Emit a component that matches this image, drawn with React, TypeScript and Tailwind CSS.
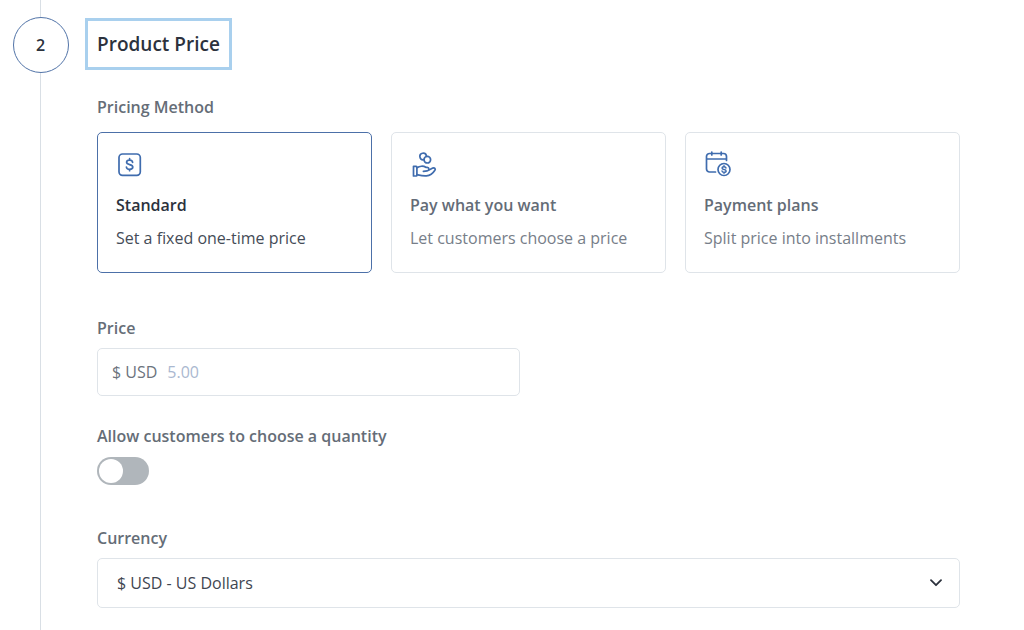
import { useState, type ReactNode } from 'react';

function StandardIcon() {
  return (
    <svg width="26" height="26" viewBox="0 0 26 26" fill="none" stroke="currentColor" strokeWidth="1.7" strokeLinecap="round" strokeLinejoin="round" aria-hidden="true">
      <rect x="2" y="2" width="21.300" height="21.300" rx="3.500" />
      <path d="M15.600 10.300c-.2-1.500-1.300-2.200-3-2.200s-3 .8-3 2.200c0 3.100 6.200 1.500 6.200 4.700 0 1.500-1.300 2.300-3.200 2.300s-3.100-.8-3.200-2.300M12.600 6.700v1.400M12.600 17.300v1.400" />
    </svg>
  );
}

function HandCoinsIcon() {
  return (
    <svg width="26" height="26" viewBox="0 0 26 26" fill="none" stroke="currentColor" strokeWidth="1.700" strokeLinecap="round" strokeLinejoin="round" aria-hidden="true">
      <path d="M12.800 7.700A3.300 3.300 0 1 1 15.400 3.700" />
      <circle cx="16.300" cy="7.700" r="3.300" />
      <path d="M2.500 14.300h2.700q.7 0 .7.700v8.300q0 .7-.7.700H2.500z" />
      <path d="M6 15.700c2.500-1.800 6.500-2 8.800-.4h1.400c2.200.2 2.200 3.200 0 3.500l-3.800.5M17.500 18.300l4.300-2.200c1.700-.7 3.100.7 2.100 2.100-2.300 3.600-4.700 5.200-8.500 5.600-3.500.3-6-.4-9.400-1.200" />
    </svg>
  );
}

function CalendarMoneyIcon() {
  return (
    <svg width="26" height="26" viewBox="0 1 26 26" fill="none" stroke="currentColor" strokeWidth="1.700" strokeLinecap="round" strokeLinejoin="round" className="overflow-visible" aria-hidden="true">
      <path d="M10.500 21H4.500A3 3 0 0 1 1.500 18V5.500a3 3 0 0 1 3-3h14a3 3 0 0 1 3 3v4M1.500 8h20M6.800 1v3M16.200 1v3" />
      <circle cx="19" cy="18.500" r="6" />
      <path strokeWidth="1.500" d="M21 17c-.2-.8-.9-1.200-2-1.200-2.600 0-2.600 2.500 0 2.700 2.800.2 2.800 2.800 0 2.800-1.200 0-1.900-.5-2-1.300M19 14.800v1M19 21.300v1" />
    </svg>
  );
}

type Method = { id: string; title: string; text: string; icon: ReactNode };

const methods: Method[] = [
  { id: 'standard', title: 'Standard', text: 'Set a fixed one-time price', icon: <StandardIcon /> },
  { id: 'flexible', title: 'Pay what you want', text: 'Let customers choose a price', icon: <HandCoinsIcon /> },
  { id: 'plans', title: 'Payment plans', text: 'Split price into installments', icon: <CalendarMoneyIcon /> },
];

const labelClass = 'block text-base leading-6 font-semibold text-[#656d77]';

export default function App() {
  const [method, setMethod] = useState('standard');
  const [quantity, setQuantity] = useState(false);

  return (
    <main className="flex min-h-screen bg-white font-['Open_Sans','Noto_Sans',sans-serif] text-base text-[#646c77]">
      <div className="flex w-[81px] shrink-0 flex-col items-center">
        <div className="h-[17px] w-px bg-[#d9dfe5]" />
        <div className="flex size-14 shrink-0 items-center justify-center rounded-full border border-[#5274a8] font-semibold text-[#2c323d]">2</div>
        <div className="w-px flex-1 bg-[#d9dfe5]" />
      </div>

      <form className="min-w-0 flex-1 pt-[18px] pr-16 pb-5 pl-4" onSubmit={(e) => e.preventDefault()}>
        <h2 className="-ml-3 w-fit">
          <button type="button" className="block border-3 border-[#a9d0ee] px-[9px] py-[9px] text-[19px] leading-7 font-semibold text-[#2c323d]">
            Product Price
          </button>
        </h2>

        <fieldset className="mt-[25px]">
          <legend className={labelClass}>Pricing Method</legend>
          <div className="mt-[13px] grid grid-cols-3 gap-[19px]">
            {methods.map((m) => {
              const active = m.id === method;
              return (
                <label
                  key={m.id}
                  className={`block cursor-pointer rounded-[5px] border px-[18px] pt-[19px] pb-[22px] ${active ? 'border-[#4c70a8]' : 'border-[#dfe4e9]'}`}
                >
                  <input type="radio" name="method" className="sr-only" checked={active} onChange={() => setMethod(m.id)} />
                  <span className="block pl-px text-[#3f6cae]">{m.icon}</span>
                  <span className={`mt-[15px] block leading-6 font-semibold ${active ? 'text-[#2c323d]' : 'text-[#646c77]'}`}>{m.title}</span>
                  <span className={`mt-[9px] block leading-6 ${active ? 'text-[#454c57]' : 'text-[#777e89]'}`}>{m.text}</span>
                </label>
              );
            })}
          </div>
        </fieldset>

        <div className="mt-[43px]">
          <label htmlFor="price" className={labelClass}>Price</label>
          <div className="mt-2 flex w-[49%] items-center rounded-[5px] border border-[#dfe4e9] px-3.5">
            <span className="shrink-0 text-[#6c737d]">$ USD</span>
            <input id="price" type="text" inputMode="decimal" placeholder="5.00" className="min-w-0 flex-1 py-[11px] pl-2.5 leading-6 outline-none placeholder:text-[#aab8d0]" />
          </div>
        </div>

        <div className="mt-7">
          <label htmlFor="quantity" className={labelClass}>Allow customers to choose a quantity</label>
          <input
            id="quantity"
            type="checkbox"
            role="switch"
            checked={quantity}
            onChange={(e) => setQuantity(e.target.checked)}
            className="mt-[9px] flex h-7 w-[52px] cursor-pointer appearance-none items-center rounded-full bg-[#b0b6bb] px-0.5 before:block before:size-6 before:rounded-full before:bg-white checked:justify-end checked:bg-[#3f6cae]"
          />
        </div>

        <div className="mt-[41px]">
          <label htmlFor="currency" className={labelClass}>Currency</label>
          <div className="mt-2 grid items-center">
            <select id="currency" className="col-start-1 row-start-1 w-full appearance-none rounded-[5px] border border-[#dfe4e9] bg-white py-3 pr-12 pl-[19px] leading-6 text-[#3f4651]">
              <option>$ USD - US Dollars</option>
            </select>
            <svg className="pointer-events-none col-start-1 row-start-1 mr-[18px] justify-self-end" width="12" height="8" viewBox="0 0 12 8" fill="none" stroke="#2c323d" strokeWidth="1.800" strokeLinecap="round" strokeLinejoin="round" aria-hidden="true">
              <path d="M1 1.200l5 5 5-5" />
            </svg>
          </div>
        </div>
      </form>
    </main>
  );
}
